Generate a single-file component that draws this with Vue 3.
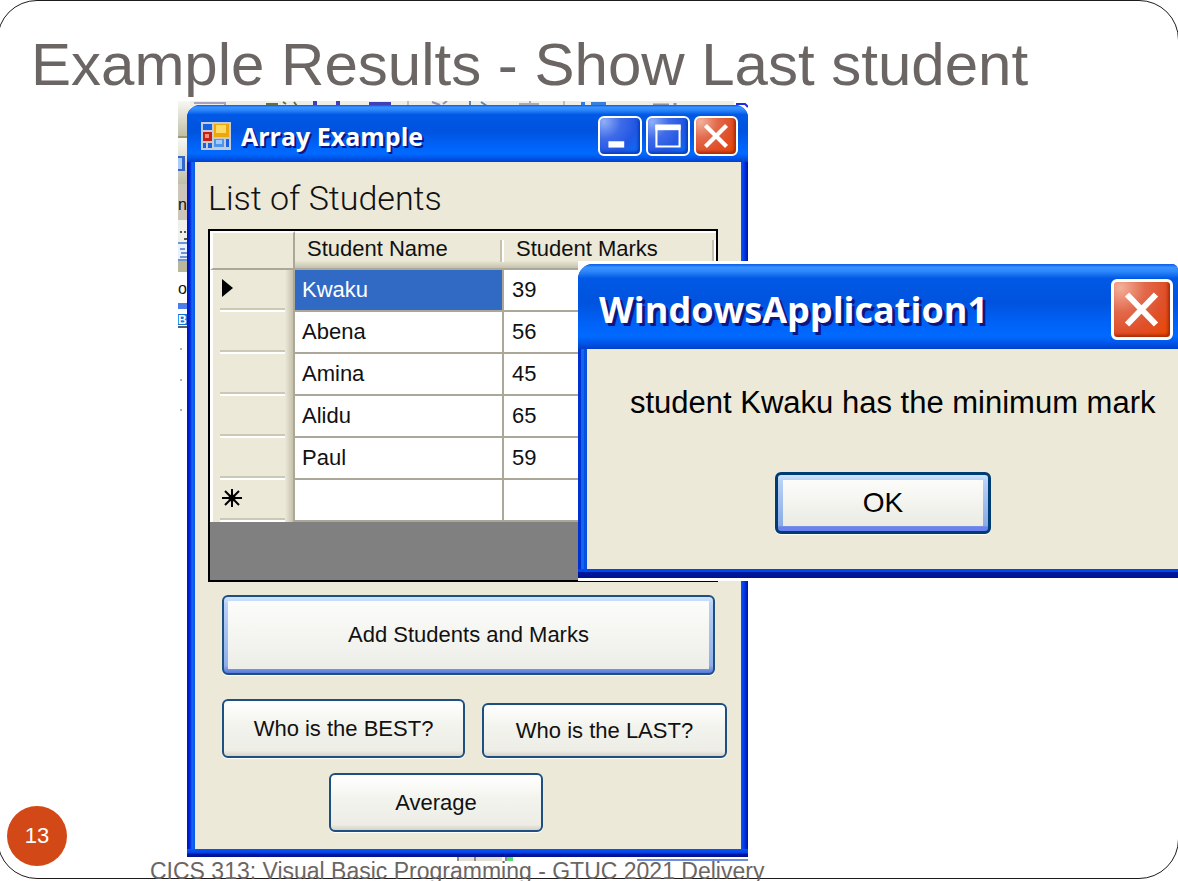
<script setup>
const students = [
  { name: 'Kwaku', marks: 39 },
  { name: 'Abena', marks: 56 },
  { name: 'Amina', marks: 45 },
  { name: 'Alidu', marks: 65 },
  { name: 'Paul', marks: 59 },
]
</script>

<template>
  <div class="page">
    <main class="slide">
      <h1 class="heading">Example Results - Show Last student</h1>

      <div class="desktop">
        <div class="capture">
          <svg class="scraps" viewBox="0 0 570 760" aria-hidden="true">
            <defs>
              <linearGradient id="bar" x1="0" y1="0" x2="0" y2="1">
                <stop offset="0" stop-color="#f8f8f4" />
                <stop offset="1" stop-color="#c0bfa8" />
              </linearGradient>
            </defs>
            <rect width="566" height="6" fill="#efeee6" />
            <rect width="12" height="35" fill="url(#bar)" />
            <rect y="35" width="12" height="2" fill="#9a9a70" />
            <rect y="37" width="12" height="46" fill="url(#bar)" />
            <rect y="55" width="7" height="15" fill="#3566c8" />
            <rect y="57" width="4" height="11" fill="#a9cdf8" />
            <rect y="83" width="12" height="36" fill="#cbc5ba" />
            <rect y="119" width="12" height="22" fill="#f0efea" />
            <path d="M2 131h2M6 131h2M6 138h3" stroke="#555" stroke-width="2" />
            <rect y="141" width="12" height="19" fill="#eaf1fc" />
            <path d="M2 148h5M3 152h6M2 156h7M0 159h9M0 142h9" stroke="#4776c4" stroke-width="1.5" />
            <rect y="160" width="12" height="11" fill="#b9b79c" />
            <rect y="202" width="12" height="6" fill="#4c7ee8" />
            <rect y="213" width="12" height="11" fill="#1572d8" />
            <rect y="225" width="12" height="2" fill="#53606f" />
            <text x="0" y="109" class="scrap-text">n</text>
            <text x="0" y="193" class="scrap-text">o</text>
            <text x="0" y="223" class="scrap-small">B</text>
            <path d="M2 248h2M2 279h2M2 309h2" stroke="#b5b5ae" stroke-width="2" />
            <path d="M16 2h31v3" fill="none" stroke="#a5a1bf" stroke-width="2" />
            <path d="M88 3h12M105 1l3 2M116 1l3 4" stroke="#61733c" stroke-width="2" />
            <path d="M137 0v5M160 0v5M191 3h22" stroke="#3f40b8" stroke-width="4" />
            <path d="M230 0v5M386 0v5" stroke="#c2c0b2" stroke-width="2" />
            <path d="M254 1l8 3M265 3l4-3" stroke="#9090b0" stroke-width="2" />
            <path d="M292 0v5M303 1l6 4" stroke="#5a88ac" stroke-width="2" />
            <path d="M341 3h20M352 0v5" stroke="#a7adb4" stroke-width="2" />
            <path d="M413 3h15M405 1v3" stroke="#377edb" stroke-width="4" />
            <path d="M475 4h16M497 2v3" stroke="#8c90a3" stroke-width="3" />
            <rect x="556" width="14" height="6" fill="#fff" />
            <path d="M558 3h9l3 3" fill="none" stroke="#1d2be8" stroke-width="2" />
            <rect x="279" y="756" width="45" height="4" fill="#e3e1d5" />
            <path d="M280 756v4M297 756v4M328 756v4" stroke="#8b8b7e" stroke-width="2" />
            <rect x="329" y="756" width="6" height="4" fill="#5adb6b" />
            <path d="M459 759h111" stroke="#6f8ce0" stroke-width="2" />
          </svg>

          <section class="window app" aria-label="Array Example">
            <header class="titlebar">
              <svg class="app-icon" viewBox="0 0 30 28" aria-hidden="true">
                <rect width="30" height="28" fill="#c5cbd2" />
                <rect x="2" y="2" width="9" height="6" fill="#1761e5" />
                <rect x="2" y="10" width="9" height="9" fill="#c42018" />
                <rect x="4" y="12" width="4" height="4" fill="#f38e7d" />
                <rect x="13" y="2" width="15" height="13" fill="#eda70b" />
                <rect x="15" y="3" width="10" height="8" fill="#ffda65" />
                <rect x="2" y="21" width="3" height="5" fill="#1761e5" />
                <rect x="7" y="21" width="4" height="5" fill="#1761e5" />
                <rect x="13" y="17" width="10" height="8" fill="#4f95ee" />
                <rect x="15" y="18" width="6" height="4" fill="#a2cbfb" />
                <rect x="25" y="17" width="3" height="8" fill="#1761e5" />
              </svg>
              <h2 class="caption">Array Example</h2>
              <div class="controls">
                <button class="control" type="button" aria-label="Minimize">
                  <svg viewBox="0 0 38 34"><rect x="8" y="22" width="15" height="6" fill="#fff" /></svg>
                </button>
                <button class="control" type="button" aria-label="Maximize">
                  <svg viewBox="0 0 38 34">
                    <path d="M8 7h22v20H8z" fill="none" stroke="#fff" stroke-width="2" />
                    <path d="M7 9h24" stroke="#fff" stroke-width="5" />
                  </svg>
                </button>
                <button class="control close" type="button" aria-label="Close">
                  <svg viewBox="0 0 38 34"><path d="M9 7l20 20M29 7L9 27" stroke="#fff" stroke-width="4" /></svg>
                </button>
              </div>
            </header>

            <div class="form">
              <h3 class="list-title" id="list-title">List of Students</h3>
              <div class="grid">
                <table aria-labelledby="list-title">
                  <colgroup><col class="c-mark" /><col class="c-name" /><col /></colgroup>
                  <thead>
                    <tr>
                      <th class="corner"></th>
                      <th scope="col"><span class="head">Student Name</span></th>
                      <th scope="col"><span class="head">Student Marks</span></th>
                    </tr>
                  </thead>
                  <tbody>
                    <tr v-for="(s, i) in students" :key="s.name">
                      <th class="rowhead">
                        <span class="rule">
                          <svg v-if="i === 0" width="12" height="18" viewBox="0 0 12 18"><path d="M0 0l11 9-11 9z" /></svg>
                        </span>
                      </th>
                      <td :class="{ selected: i === 0 }">{{ s.name }}</td>
                      <td>{{ s.marks }}</td>
                    </tr>
                    <tr>
                      <th class="rowhead">
                        <span class="rule">
                          <svg width="20" height="18" viewBox="0 0 20 18">
                            <path d="M0 9h20M10 0v18M3 2l14 14M17 2L3 16" fill="none" stroke="#000" stroke-width="2" />
                            <circle cx="10" cy="9" r="3.5" />
                          </svg>
                        </span>
                      </th>
                      <td></td>
                      <td></td>
                    </tr>
                  </tbody>
                </table>
              </div>
              <div class="actions">
                <button class="xp primary" type="button">Add Students and Marks</button>
                <div class="pair">
                  <button class="xp best" type="button">Who is the BEST?</button>
                  <button class="xp last" type="button">Who is the LAST?</button>
                </div>
                <button class="xp average" type="button">Average</button>
              </div>
            </div>
          </section>
        </div>

        <div class="message-layer">
          <section class="window message" role="dialog" aria-label="WindowsApplication1">
            <header class="titlebar">
              <h2 class="caption">WindowsApplication1</h2>
              <button class="control close" type="button" aria-label="Close message">
                <svg viewBox="0 0 56 54"><path d="M13 12l29 30M42 12L13 42" stroke="#fff" stroke-width="6" /></svg>
              </button>
            </header>
            <div class="message-body">
              <p>student Kwaku has the minimum mark</p>
              <button class="xp ok" type="button">OK</button>
            </div>
          </section>
        </div>
      </div>
    </main>
    <span class="number">13</span>
    <footer class="footer">CICS 313: Visual Basic Programming - GTUC 2021 Delivery</footer>
  </div>
</template>

<style>
html,
body {
  height: 100%;
  margin: 0;
  overflow: hidden;
  background: #fff;
}
#app {
  height: 100%;
}
</style>

<style scoped>
* {
  box-sizing: border-box;
}
.page {
  position: relative;
  height: 100%;
  font-family: "Liberation Sans", Arial, sans-serif;
}
.slide {
  height: calc(100% - 2px);
  margin: 0 -1px 0 -3px;
  padding-left: 3px;
  border: 1px solid #1c1a1a;
  border-radius: 40px;
}
.heading {
  margin: 0;
  padding: 29px 0 1px 30px;
  font-size: 60px;
  line-height: 70px;
  font-weight: 400;
  color: #6b6664;
  white-space: nowrap;
}
.desktop {
  position: relative;
}
.capture {
  position: absolute;
  left: 177px;
  top: 0;
  width: 570px;
  padding: 4px 0 4px 9px;
}
.scraps {
  position: absolute;
  left: 0;
  top: 0;
  width: 570px;
  height: 760px;
}
.scrap-text {
  font-size: 16px;
  fill: #111;
}
.scrap-small {
  font-size: 12px;
  font-weight: 700;
  fill: #fff;
}
.window {
  display: flex;
  flex-direction: column;
  position: relative;
  background: #ece9d8;
}
.app {
  height: 752px;
  padding: 0 7px 8px 8px;
  border-radius: 13px 13px 0 0;
  background:
    linear-gradient(transparent calc(100% - 8px), #0a56f0 calc(100% - 8px), #0040e8 calc(100% - 4px), #0018a8 calc(100% - 3px), #001090),
    linear-gradient(90deg, #0013b8 0, #0027dd 3px, #1268ef 5px, #0a56e8 8px, #0a56e8 calc(100% - 7px), #0b4df0 calc(100% - 6px), #0030e0 calc(100% - 3px), #0010a0);
}
.titlebar {
  display: flex;
  flex: none;
  align-items: center;
  background: linear-gradient(#0a5be8 0, #3a93ff 4%, #2b86fb 9%, #0059e5 17%, #0053de 45%, #0062f8 70%, #006aff 85%, #0055ea 93%, #0040c8);
}
.app .titlebar {
  height: 57px;
  margin: 0 -7px 0 -8px;
  padding: 4px 10px 0 14px;
  border-radius: 13px 13px 0 0;
}
.app-icon {
  width: 30px;
  height: 28px;
}
.caption {
  flex: 1;
  margin: 0;
  font-family: "Open Sans", "Noto Sans", sans-serif;
  font-weight: 700;
  color: #fff;
  white-space: nowrap;
}
.app .caption {
  padding-left: 10px;
  font-size: 25px;
  line-height: 32px;
  text-shadow: 2px 2px 0 #0a1883;
}
.controls {
  display: flex;
  gap: 4px;
}
.control {
  display: block;
  width: 44px;
  height: 40px;
  padding: 0;
  border: 2px solid #fff;
  border-radius: 6px;
  background: radial-gradient(circle at 10% 10%, #90aef8 0, #3f6be8 35%, #2257e4 65%, #0a6cf8 90%);
  box-shadow: inset -2px -2px 3px #0c3cb8;
}
.control svg {
  display: block;
  width: 100%;
  height: 100%;
}
.close {
  background: radial-gradient(circle at 12% 10%, #f3b09b 0, #e2694b 35%, #df4f28 65%, #e84a08 90%);
  box-shadow: inset -2px -2px 3px #a82a08;
}
.form {
  flex: 1;
  padding: 0 14px 0 13px;
  background: #ece9d8;
}
.list-title {
  margin: 0;
  padding: 17px 0 12px 0;
  font-family: Roboto, "Liberation Sans", sans-serif;
  font-size: 34px;
  line-height: 38px;
  font-weight: 300;
  color: #111;
}
.grid {
  width: 510px;
  height: 353px;
  border: 2px solid #000;
  background: #808080;
}
table {
  width: 100%;
  table-layout: fixed;
  border-collapse: separate;
  border-spacing: 0;
  font-size: 22px;
  line-height: 26px;
  color: #111;
}
.c-mark {
  width: 85px;
}
.c-name {
  width: 209px;
}
thead th {
  height: 39px;
  padding: 0;
  border-bottom: 2px solid #aca899;
  border-top: 2px solid #fff;
  background: linear-gradient(#ece9d8 78%, #c5c1ad);
  font-weight: 400;
  text-align: left;
}
thead .corner {
  border-left: 3px solid #fff;
  border-right: 2px solid #aca899;
  background: #ece9d8;
}
.head {
  display: block;
  height: 22px;
  padding-left: 12px;
  border-right: 2px solid #fff;
  box-shadow: inset -2px 0 0 #c5c1ad;
  line-height: 18px;
}
.rowhead {
  height: 42px;
  padding: 0 8px 0 7px;
  border-left: 3px solid #fff;
  border-right: 2px solid #aca899;
  background: linear-gradient(90deg, #ece9d8 90%, #c5c1ad);
}
.rule {
  display: flex;
  align-items: center;
  height: 42px;
  padding: 0 0 4px 2px;
  border-bottom: 2px solid #fff;
  box-shadow: inset 0 -2px 0 #ccc8b6;
}
td {
  height: 42px;
  padding: 0 7px;
  border-right: 2px solid #aca899;
  border-bottom: 2px solid #aca899;
  background: #fff;
}
td:last-child {
  padding-left: 8px;
  border-right: 0;
}
.selected {
  background: #316ac5;
  color: #fff;
}
.actions {
  padding: 13px 0 0 14px;
}
.xp {
  display: block;
  padding: 0;
  border: 2px solid #1d5080;
  border-radius: 6px;
  background: linear-gradient(#fff, #f4f4ef 40%, #edede6 90%, #d8d2c6);
  box-shadow: 0 1px 1px #fff;
  font-family: "Liberation Sans", Arial, sans-serif;
  font-size: 22px;
  line-height: 26px;
  color: #111;
}
.primary {
  width: 493px;
  height: 80px;
  padding: 4px;
  background:
    linear-gradient(#fcfcfa, #edede8) content-box,
    linear-gradient(#cfe4fd, #bad1f7 10%, #8fb0ea 90%, #5878d8);
}
.pair {
  display: flex;
  align-items: flex-end;
  gap: 17px;
  margin-top: 24px;
}
.best {
  width: 243px;
  height: 59px;
}
.last {
  flex: none;
  width: 245px;
  height: 55px;
}
.average {
  width: 214px;
  height: 59px;
  margin: 15px 0 0 107px;
}
.message-layer {
  position: absolute;
  left: 577px;
  right: 0;
  top: 160px;
  padding: 3px 0;
  background: #fff;
}
.message {
  height: 314px;
  padding: 0 0 9px 9px;
  border-radius: 15px 6px 0 0;
  background: linear-gradient(transparent calc(100% - 9px), #0047f0 calc(100% - 9px), #0047f0 calc(100% - 6px), #001a9c calc(100% - 6px), #001090),
    linear-gradient(90deg, #0030d0 3px, #1168ee 3px, #1168ee 6px, #0850e0 6px);
}
.message .titlebar {
  height: 85px;
  margin-left: -9px;
  padding: 6px 5px 0 21px;
  border-radius: 15px 6px 0 0;
}
.message .caption {
  font-size: 36px;
  line-height: 48px;
  text-shadow: 3px 3px 0 #0a1883;
}
.message .control {
  width: 62px;
  height: 61px;
  border-width: 3px;
}
.message-body {
  flex: 1;
  display: flex;
  flex-direction: column;
  align-items: flex-start;
  padding: 35px 0 0 43px;
  background: #ece9d8;
}
.message-body p {
  margin: 0;
  font-size: 31px;
  line-height: 38px;
  white-space: nowrap;
  color: #000;
}
.ok {
  width: 216px;
  height: 62px;
  margin: 50px 0 0 145px;
  padding: 5px;
  border: 3px solid #003c74;
  font-size: 28px;
  line-height: 36px;
  color: #000;
  background:
    linear-gradient(#fcfcfa, #ebebe4) content-box,
    linear-gradient(#cfe4fd, #bad1f7 10%, #8aabe6 90%, #6982ee 93%);
}
.number {
  position: absolute;
  left: 7px;
  bottom: 15px;
  width: 60px;
  height: 60px;
  border-radius: 50%;
  background: #d34817;
  color: #fff;
  font-size: 22px;
  line-height: 60px;
  text-align: center;
}
.footer {
  position: absolute;
  left: 150px;
  bottom: -3px;
  font-size: 23px;
  line-height: 26px;
  color: #6b6664;
  white-space: nowrap;
}
</style>
